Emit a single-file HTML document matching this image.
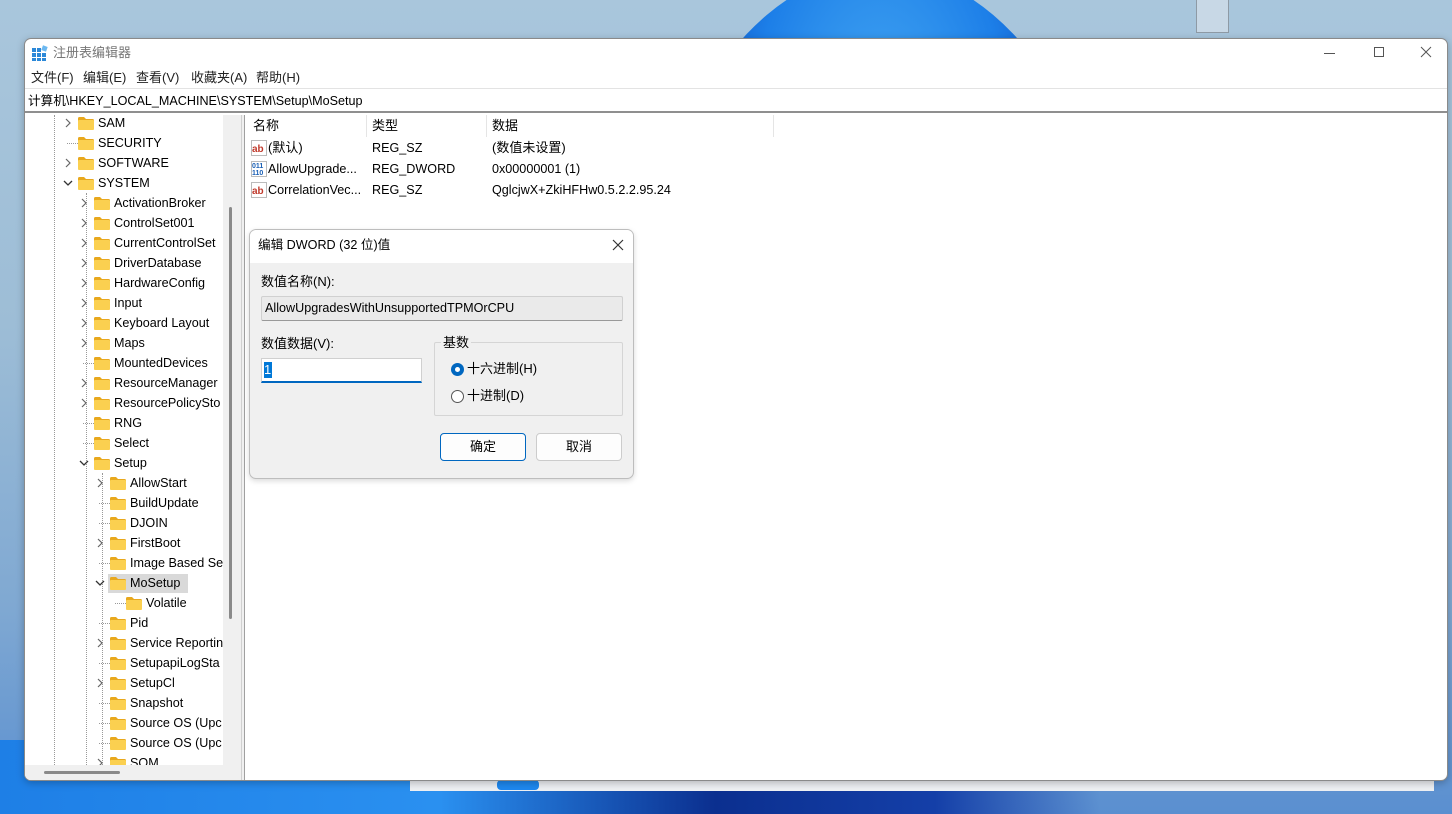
<!DOCTYPE html>
<html style="overflow:hidden;width:1452px;height:814px"><head><meta charset="utf-8"><style>
*{margin:0;padding:0;box-sizing:border-box}
body{width:1452px;height:814px;overflow:hidden;position:relative;font-family:"Liberation Sans","Noto Sans CJK SC",sans-serif;font-size:13px;color:#000;
background:linear-gradient(180deg,#a9c6dc 0%,#9dbdd6 40%,#7fa8d2 75%,#5a8fd0 100%)}
.a{position:absolute}
.bloom{left:640px;top:-30px;width:480px;height:760px;border-radius:50%;background:radial-gradient(ellipse at 50% 30%,#4fb2f5 0%,#1d7fe8 40%,#0a4bc0 62%,rgba(10,60,170,0) 72%)}
.bot{left:0;top:740px;width:1100px;height:74px;background:linear-gradient(90deg,#1e7fe6,#2a90f0 40%,#0b2f8f 65%,#143fa8 85%,rgba(60,110,190,0))}
.win{left:24px;top:38px;width:1424px;height:743px;background:#fff;border:1px solid #8a8a8a;border-radius:7px;overflow:hidden;box-shadow:0 2px 8px rgba(0,0,0,.25)}
.t{white-space:nowrap;line-height:16px}
.fold{position:absolute;width:16px;height:13px}
.row{position:absolute;height:20px;line-height:20px;white-space:nowrap;font-size:12.6px}
</style></head><body>
<div class="a bloom"></div>
<div class="a bot"></div>
<div class="a" style="left:1196px;top:0;width:33px;height:33px;background:#c8d8e6;border:1px solid #8e9aa5;border-top:none"></div>
<div class="a" style="left:410px;top:775px;width:1024px;height:16px;background:#eef0f3"></div>
<div class="a" style="left:497px;top:780px;width:42px;height:10px;background:#1e88f0;border-radius:4px"></div>

<div class="a win">
 <svg class="a" style="left:7px;top:6px" width="16" height="16" viewBox="0 0 16 16">
  <g fill="#2b88d8"><rect x="0" y="3" width="4" height="4"/><rect x="5" y="3" width="4" height="4"/><rect x="0" y="8" width="4" height="4"/><rect x="5" y="8" width="4" height="4"/><rect x="10" y="8" width="4" height="4"/><rect x="0" y="13" width="4" height="3"/><rect x="5" y="13" width="4" height="3"/><rect x="10" y="13" width="4" height="3"/></g>
  <rect x="10" y="1" width="5" height="5" fill="#6cb8f0" transform="rotate(20 12.5 3.5)"/>
 </svg>
 <div class="a t" style="left:28px;top:6px;color:#777">注册表编辑器</div>
 <div class="a" style="left:1299px;top:14px;width:11px;height:1px;background:#555"></div>
 <div class="a" style="left:1349px;top:8px;width:10px;height:10px;border:1px solid #555"></div>
 <svg class="a" style="left:1395px;top:7px" width="12" height="12"><path d="M1 1L11 11M11 1L1 11" stroke="#555" stroke-width="1"/></svg>
 <div class="a t" style="left:6px;top:31px;color:#222">文件(F)</div>
 <div class="a t" style="left:58px;top:31px;color:#222">编辑(E)</div>
 <div class="a t" style="left:111px;top:31px;color:#222">查看(V)</div>
 <div class="a t" style="left:166px;top:31px;color:#222">收藏夹(A)</div>
 <div class="a t" style="left:231px;top:31px;color:#222">帮助(H)</div>
 <div class="a" style="left:0;top:49px;width:1424px;height:25px;border-top:1px solid #e3e3e3;border-bottom:2px solid #8f8f8f;background:#fff"></div>
 <div class="a t" style="left:3px;top:54px;font-size:12.6px">计算机\HKEY_LOCAL_MACHINE\SYSTEM\Setup\MoSetup</div>
 <div class="a" style="left:0;top:76px;width:216px;height:667px;background:#fff;overflow:hidden" id="tree">
  <div class="a" style="left:29px;top:0;height:650px;border-left:1px dotted #999"></div>
  <div class="a" style="left:61px;top:78px;height:572px;border-left:1px dotted #999"></div>
  <div class="a" style="left:77px;top:358px;height:292px;border-left:1px dotted #999"></div>
 </div>
 <div class="a" style="left:198px;top:76px;width:18px;height:650px;background:#f0f0f0"></div>
 <div class="a" style="left:204px;top:168px;width:3px;height:412px;background:#8a8a8a;border-radius:2px"></div>
 <div class="a" style="left:0;top:726px;width:216px;height:17px;background:#f0f0f0"></div>
 <div class="a" style="left:19px;top:732px;width:76px;height:3px;background:#8a8a8a;border-radius:2px"></div>
 <div class="a" style="left:216px;top:76px;width:4px;height:667px;background:#f0f0f0;border-left:1px solid #d0d0d0;border-right:1px solid #a0a0a0"></div>
 <div class="a" style="left:341px;top:76px;width:1px;height:22px;background:#e5e5e5"></div>
 <div class="a" style="left:461px;top:76px;width:1px;height:22px;background:#e5e5e5"></div>
 <div class="a" style="left:748px;top:76px;width:1px;height:22px;background:#e5e5e5"></div>
 <div class="a t" style="left:228px;top:79px">名称</div>
 <div class="a t" style="left:347px;top:79px">类型</div>
 <div class="a t" style="left:467px;top:79px">数据</div>
 <svg class="a" style="left:226px;top:101px" width="16" height="16"><rect x="0.5" y="0.5" width="15" height="15" fill="#fff" stroke="#bbb"/><text x="1" y="12" font-size="10" font-weight="bold" fill="#c0392b" font-family="Liberation Sans">ab</text></svg>
 <div class="a t" style="left:243px;top:101px">(默认)</div>
 <div class="a t" style="left:347px;top:101px;font-size:12.6px">REG_SZ</div>
 <div class="a t" style="left:467px;top:101px">(数值未设置)</div>
 <svg class="a" style="left:226px;top:122px" width="16" height="16"><rect x="0.5" y="0.5" width="15" height="15" fill="#fff" stroke="#bbb"/><text x="1" y="7" font-size="7" font-weight="bold" fill="#1a5fb4" font-family="Liberation Sans">011</text><text x="1" y="14" font-size="7" font-weight="bold" fill="#1a5fb4" font-family="Liberation Sans">110</text></svg>
 <div class="a t" style="left:243px;top:122px;font-size:12.6px">AllowUpgrade...</div>
 <div class="a t" style="left:347px;top:122px;font-size:12.6px">REG_DWORD</div>
 <div class="a t" style="left:467px;top:122px;font-size:12.6px">0x00000001 (1)</div>
 <svg class="a" style="left:226px;top:143px" width="16" height="16"><rect x="0.5" y="0.5" width="15" height="15" fill="#fff" stroke="#bbb"/><text x="1" y="12" font-size="10" font-weight="bold" fill="#c0392b" font-family="Liberation Sans">ab</text></svg>
 <div class="a t" style="left:243px;top:143px;font-size:12.6px">CorrelationVec...</div>
 <div class="a t" style="left:347px;top:143px;font-size:12.6px">REG_SZ</div>
 <div class="a t" style="left:467px;top:143px;font-size:12.6px">QglcjwX+ZkiHFHw0.5.2.2.95.24</div>

 <div class="a" style="left:224px;top:190px;width:385px;height:250px;background:#f0f0f0;border:1px solid #bdbdbd;border-radius:7px;overflow:hidden;box-shadow:0 2px 6px rgba(0,0,0,.15)">
  <div class="a" style="left:0;top:0;width:385px;height:33px;background:#fff"></div>
  <div class="a t" style="left:8px;top:7px;font-size:12.6px">编辑 DWORD (32 位)值</div>
  <svg class="a" style="left:362px;top:9px" width="12" height="12"><path d="M1 1L11 11M11 1L1 11" stroke="#333" stroke-width="1.2"/></svg>
  <div class="a t" style="left:11px;top:44px">数值名称(N):</div>
  <div class="a" style="left:11px;top:66px;width:362px;height:25px;background:#eaeaea;border:1px solid #d0d0d0;border-bottom:1px solid #999;border-radius:2px"></div>
  <div class="a t" style="left:15px;top:70px;font-size:12.6px">AllowUpgradesWithUnsupportedTPMOrCPU</div>
  <div class="a t" style="left:11px;top:106px">数值数据(V):</div>
  <div class="a" style="left:11px;top:128px;width:161px;height:25px;background:#fff;border:1px solid #d0d0d0;border-bottom:2px solid #0067c0"></div>
  <div class="a" style="left:14px;top:132px;width:8px;height:16px;background:#0078d7;color:#fff;line-height:16px;font-size:13px">1</div>
  <div class="a" style="left:184px;top:112px;width:189px;height:74px;border:1px solid #d5d5d5;border-radius:2px"></div>
  <div class="a t" style="left:191px;top:105px;background:#f0f0f0;padding:0 2px">基数</div>
  <div class="a" style="left:201px;top:133px;width:13px;height:13px;border-radius:50%;background:#0067c0"><div class="a" style="left:4px;top:4px;width:5px;height:5px;border-radius:50%;background:#fff"></div></div>
  <div class="a t" style="left:217px;top:131px">十六进制(H)</div>
  <div class="a" style="left:201px;top:160px;width:13px;height:13px;border-radius:50%;border:1px solid #555;background:#fff"></div>
  <div class="a t" style="left:217px;top:158px">十进制(D)</div>
  <div class="a" style="left:190px;top:203px;width:86px;height:28px;background:#fdfdfd;border:1px solid #0067c0;border-radius:4px;text-align:center;line-height:26px">确定</div>
  <div class="a" style="left:286px;top:203px;width:86px;height:28px;background:#fdfdfd;border:1px solid #ccc;border-radius:4px;text-align:center;line-height:26px">取消</div>
 </div>
</div>

<script>
var rows=[["SAM",0,">"],["SECURITY",0,""],["SOFTWARE",0,">"],["SYSTEM",0,"v"],["ActivationBroker",1,">"],["ControlSet001",1,">"],["CurrentControlSet",1,">"],["DriverDatabase",1,">"],["HardwareConfig",1,">"],["Input",1,">"],["Keyboard Layout",1,">"],["Maps",1,">"],["MountedDevices",1,""],["ResourceManager",1,">"],["ResourcePolicySto",1,">"],["RNG",1,""],["Select",1,""],["Setup",1,"v"],["AllowStart",2,">"],["BuildUpdate",2,""],["DJOIN",2,""],["FirstBoot",2,">"],["Image Based Se",2,""],["MoSetup",2,"v"],["Volatile",3,""],["Pid",2,""],["Service Reportin",2,">"],["SetupapiLogSta",2,""],["SetupCl",2,">"],["Snapshot",2,""],["Source OS (Upc",2,""],["Source OS (Upc",2,""],["SQM",2,">"]];
var tr=document.getElementById('tree'),h='';
rows.forEach(function(r,i){
 var y=i*20-2,L=r[1],cx=39+16*L,fx=53+16*L,tx=73+16*L;
 if(r[0]=="MoSetup")h+='<div class="a" style="left:'+(fx-2)+'px;top:'+(y+1)+'px;width:80px;height:19px;background:#d9d9d9"></div>';
 if(r[2]==">")h+='<svg class="a" style="left:'+cx+'px;top:'+(y+5)+'px" width="8" height="10"><path d="M2 1L6 5L2 9" fill="none" stroke="#666" stroke-width="1.2"/></svg>';
 else if(r[2]=="v")h+='<svg class="a" style="left:'+(cx-1)+'px;top:'+(y+6)+'px" width="10" height="8"><path d="M1 2L5 6L9 2" fill="none" stroke="#333" stroke-width="1.3"/></svg>';
 else h+='<div class="a" style="left:'+(cx+3)+'px;top:'+(y+10)+'px;width:'+(fx-cx-3)+'px;border-top:1px dotted #999"></div>';
 h+='<svg class="fold" style="left:'+fx+'px;top:'+(y+4)+'px" viewBox="0 0 16 13"><path d="M0 1.5Q0 0 1.5 0H6L8 2H14.5Q16 2 16 3.5V12H0Z" fill="#e8a81d"/><rect x="0" y="3" width="16" height="10" rx="1" fill="#fbd050"/></svg>';
 h+='<div class="row" style="left:'+tx+'px;top:'+y+'px">'+r[0]+'</div>';
});
tr.innerHTML+=h;
</script>
</body></html>
